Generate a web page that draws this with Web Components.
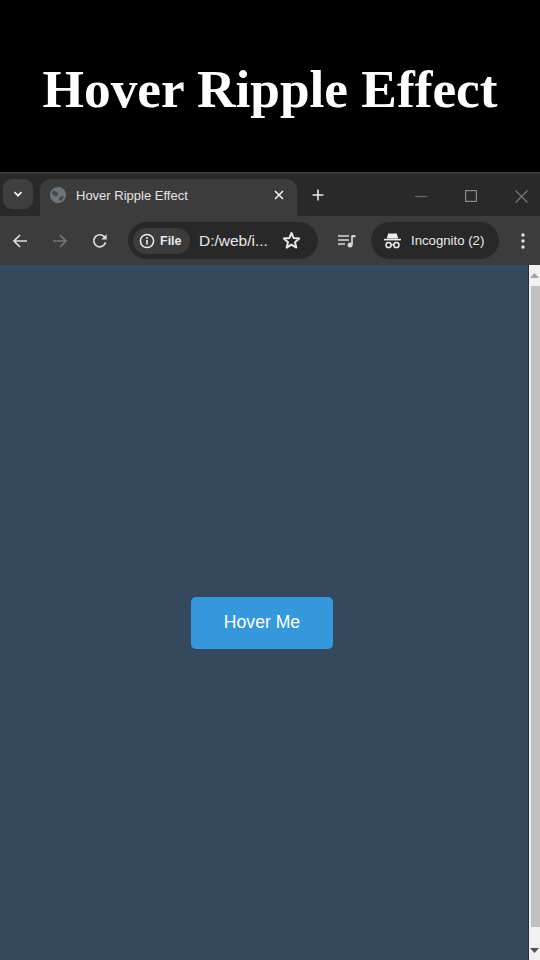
<!DOCTYPE html>
<html>
<head>
<meta charset="utf-8">
<title>Hover Ripple Effect</title>
<style>
html, body { margin: 0; height: 100%; background: #000; }
body { display: flex; flex-direction: column; width: 540px; height: 960px; overflow: hidden; font-family: "Liberation Sans", sans-serif; }
</style>
</head>
<body>
<video-title>Hover Ripple Effect</video-title>
<tab-strip title-text="Hover Ripple Effect"></tab-strip>
<tool-bar></tool-bar>
<page-view><ripple-button>Hover Me</ripple-button></page-view>

<script>
class VideoTitle extends HTMLElement {
  constructor() {
    super();
    this.attachShadow({ mode: "open" });
    this.shadowRoot.innerHTML = `
<style>
:host {
  display: flex;
  justify-content: center;
  align-items: center;
  height: 172px;
  padding-top: 6px;
  box-sizing: border-box;
  background: #000;
  color: #fff;
  font: bold 53.3px "Liberation Serif", serif;
}
</style>
<slot></slot>`;
  }
}

class TabStrip extends HTMLElement {
  constructor() {
    super();
    this.attachShadow({ mode: "open" });
    this.shadowRoot.innerHTML = `
<style>
:host {
  display: flex;
  align-items: flex-end;
  height: 44px;
  box-sizing: border-box;
  background: #292929;
  border-top: 2px solid #3a3a3a;
  color: #e4e4e4;
  font-family: "Liberation Sans", sans-serif;
}
.search {
  width: 30px;
  height: 30px;
  margin: 0 7px 7px 3px;
  border-radius: 9px;
  background: #3f3f3f;
  display: flex;
  align-items: center;
  justify-content: center;
}
.tab {
  width: 257px;
  height: 37px;
  box-sizing: border-box;
  padding: 0 12px 5px 10px;
  border-radius: 10px 10px 0 0;
  background: #3c3c3c;
  display: flex;
  align-items: center;
  font-size: 13px;
}
.fav { margin-right: 10px; }
.label { flex: 1; }
.plus { margin: 0 0 6px 14px; height: 30px; display: flex; align-items: center; }
.win { margin-left: auto; display: flex; align-items: center; height: 40px; }
.win svg { display: block; }
</style>
<div class="search">
  <svg width="12" height="12" viewBox="0 0 12 12"><path d="M2.5 4.2 6 7.7l3.5-3.5" fill="none" stroke="#f0f0f0" stroke-width="1.8"/></svg>
</div>
<div class="tab">
  <svg class="fav" width="16" height="16" viewBox="0 0 16 16"><circle cx="8" cy="8" r="8" fill="#70757a"/><path d="M3 3.5 7 5l1.5 2.5L6 9.5 2 7zM9 10.5l4-2 1 1.5-3 4-2-1z" fill="#45484b"/></svg>
  <span class="label"></span>
  <svg width="12" height="12" viewBox="0 0 12 12"><path d="M2 2l8 8M10 2l-8 8" stroke="#ececec" stroke-width="1.7"/></svg>
</div>
<div class="plus">
  <svg width="14" height="14" viewBox="0 0 14 14"><path d="M7 1.5v11M1.5 7h11" stroke="#e8e8e8" stroke-width="1.6"/></svg>
</div>
<div class="win">
  <svg width="12" height="12" viewBox="0 0 12 12" style="margin-right:38px"><path d="M0 6.5h12" stroke="#6f6f6f" stroke-width="1.2"/></svg>
  <svg width="12" height="12" viewBox="0 0 12 12" style="margin-right:38px"><rect x=".6" y=".6" width="10.8" height="10.8" fill="none" stroke="#8a8a8a" stroke-width="1.2"/></svg>
  <svg width="13" height="13" viewBox="0 0 13 13" style="margin-right:12px"><path d="M.5.5l12 12M12.5.5l-12 12" stroke="#7d7d7d" stroke-width="1.1"/></svg>
</div>`;
    this.shadowRoot.querySelector(".label").textContent = this.getAttribute("title-text");
  }
}

class ToolBar extends HTMLElement {
  constructor() {
    super();
    this.attachShadow({ mode: "open" });
    this.shadowRoot.innerHTML = `
<style>
:host {
  display: flex;
  align-items: center;
  height: 49px;
  padding: 0 0 0 12px;
  box-sizing: border-box;
  background: #3c3c3c;
  color: #e8e8e8;
  font-family: "Liberation Sans", sans-serif;
}
svg { display: block; flex: none; }
.omni {
  width: 190px;
  height: 37px;
  margin-left: 20px;
  padding: 0 17px 0 5px;
  box-sizing: border-box;
  border-radius: 19px;
  background: #282828;
  display: flex;
  align-items: center;
}
.chip {
  width: 57px;
  height: 26px;
  box-sizing: border-box;
  padding-left: 6px;
  border-radius: 13px;
  background: #3c3c3c;
  display: flex;
  align-items: center;
  gap: 5px;
  font-size: 12.5px;
  font-weight: bold;
}
.url { margin-left: 9px; flex: 1; white-space: nowrap; font-size: 15.5px; }
.pill {
  width: 128px;
  height: 37px;
  margin-left: 15px;
  box-sizing: border-box;
  padding-left: 13px;
  border-radius: 19px;
  background: #282828;
  display: flex;
  align-items: center;
  gap: 10px;
  font-size: 13.2px;
}
</style>
<svg width="16" height="16" viewBox="0 0 16 16" style="margin-right:24px"><path d="M15 8H2.5M8 2 2 8l6 6" fill="none" stroke="#dcdcdc" stroke-width="1.7"/></svg>
<svg width="16" height="16" viewBox="0 0 16 16" style="margin-right:24px"><path d="M1 8h12.5M8 2l6 6-6 6" fill="none" stroke="#757575" stroke-width="1.7"/></svg>
<svg width="16" height="16" viewBox="0 0 16 16"><path d="M13.6 9.3A6 6 0 1 1 12.3 3.8L14 5.6" fill="none" stroke="#dcdcdc" stroke-width="1.7"/><path d="M14.6 1.2v5.3H9.3z" fill="#dcdcdc"/></svg>
<div class="omni">
  <div class="chip">
    <svg width="16" height="16" viewBox="0 0 16 16"><circle cx="8" cy="8" r="6.6" fill="none" stroke="#ececec" stroke-width="1.5"/><path d="M8 7v4.6" stroke="#ececec" stroke-width="1.6"/><circle cx="8" cy="4.9" r="1" fill="#ececec"/></svg>
    <span>File</span>
  </div>
  <span class="url">D:/web/i...</span>
  <svg width="19" height="19" viewBox="0 0 19 19"><path d="M9.5 2l2.2 5.1 5.5.5-4.2 3.6 1.3 5.4-4.8-2.9-4.8 2.9 1.3-5.4-4.2-3.6 5.5-.5z" fill="none" stroke="#e8e8e8" stroke-width="2" stroke-linejoin="round"/></svg>
</div>
<svg width="18" height="14" viewBox="0 0 18 14" style="margin-left:20px"><path d="M0 2h11M0 6h11M0 10h7" stroke="#d8d8d8" stroke-width="1.6"/><path d="M14 1.5V11" stroke="#d8d8d8" stroke-width="1.7"/><path d="M14 1h3.5v2.2H14z" fill="#d8d8d8"/><circle cx="12" cy="11" r="2.5" fill="#d8d8d8"/></svg>
<div class="pill">
  <svg width="17" height="17" viewBox="0 0 17 17"><path d="M4.2 1.5h8.6l1.4 5H2.8z" fill="#ededed"/><path d="M0 7.6h17" stroke="#ededed" stroke-width="1.6"/><circle cx="4.6" cy="13" r="2.6" fill="none" stroke="#ededed" stroke-width="1.5"/><circle cx="12.4" cy="13" r="2.6" fill="none" stroke="#ededed" stroke-width="1.5"/><path d="M7.2 12.6h2.6" stroke="#ededed" stroke-width="1.3"/></svg>
  <span>Incognito (2)</span>
</div>
<svg width="4" height="16" viewBox="0 0 4 16" style="margin-left:22px"><circle cx="2" cy="2" r="1.7" fill="#e4e4e4"/><circle cx="2" cy="8" r="1.7" fill="#e4e4e4"/><circle cx="2" cy="14" r="1.7" fill="#e4e4e4"/></svg>`;
  }
}

class PageView extends HTMLElement {
  constructor() {
    super();
    this.attachShadow({ mode: "open" });
    this.shadowRoot.innerHTML = `
<style>
:host {
  display: flex;
  flex: 1;
  min-height: 0;
  background: #34495e;
}
.content {
  flex: 1;
  display: flex;
  align-items: center;
  justify-content: center;
  padding: 21px 4px 0 0;
  box-sizing: border-box;
  border-right: 1px solid #1f3044;
}
.bar {
  width: 11px;
  background: #f1f1f1;
  display: flex;
  flex-direction: column;
}
.end { flex: none; display: flex; align-items: center; justify-content: center; }
.top { height: 21px; padding-bottom: 1px; box-sizing: border-box; }
.bottom { height: 33px; padding-top: 14px; box-sizing: border-box; }
.thumb { flex: 1; margin-left: 2px; background: #c1bfbf; }
</style>
<div class="content"><slot></slot></div>
<div class="bar">
  <div class="end top"><svg width="9" height="5" viewBox="0 0 9 5"><path d="M4.5 0l4.5 5H0z" fill="#a3a3a3"/></svg></div>
  <div class="thumb"></div>
  <div class="end bottom"><svg width="9" height="5" viewBox="0 0 9 5"><path d="M0 0h9L4.5 5z" fill="#505050"/></svg></div>
</div>`;
  }
}

class RippleButton extends HTMLElement {
  constructor() {
    super();
    this.attachShadow({ mode: "open" });
    this.shadowRoot.innerHTML = `
<style>
:host {
  display: inline-block;
}
button {
  display: block;
  width: 142px;
  height: 52px;
  padding: 0 0 1px;
  border: 0;
  border-radius: 5px;
  background: #3498db;
  color: #fff;
  font: 17.6px "Liberation Sans", sans-serif;
  cursor: pointer;
}
</style>
<button><slot></slot></button>`;
  }
}

customElements.define("video-title", VideoTitle);
customElements.define("tab-strip", TabStrip);
customElements.define("tool-bar", ToolBar);
customElements.define("page-view", PageView);
customElements.define("ripple-button", RippleButton);
</script>
</body>
</html>
